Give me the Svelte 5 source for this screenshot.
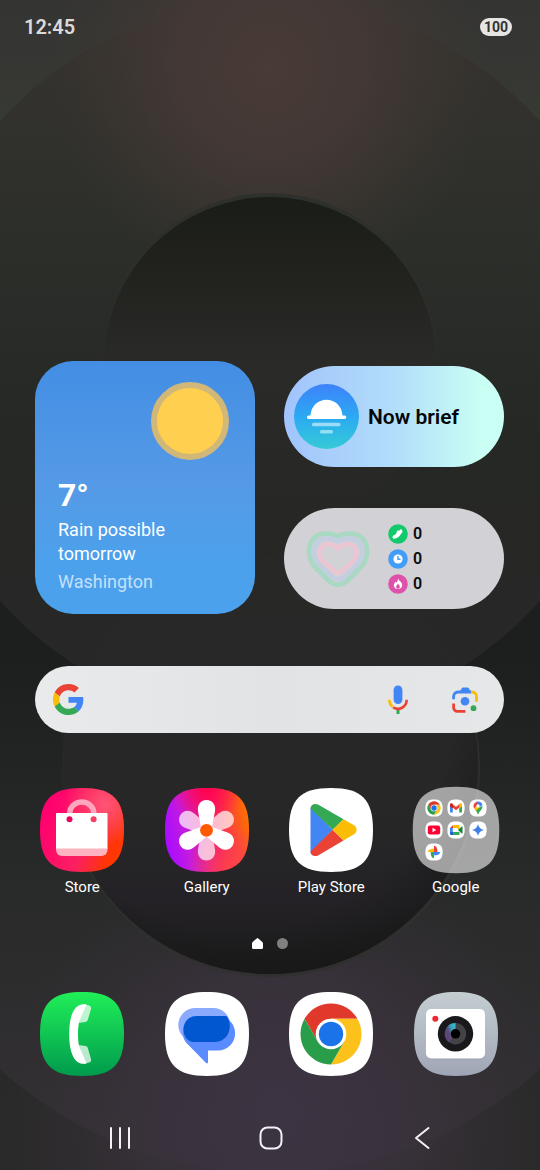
<script>
  const apps = [
    { id: 'store', label: 'Store' },
    { id: 'gallery', label: 'Gallery' },
    { id: 'play', label: 'Play Store' },
    { id: 'folder', label: 'Google' }
  ];
  const dock = [
    { id: 'phone', label: 'Phone' },
    { id: 'messages', label: 'Messages' },
    { id: 'chrome', label: 'Chrome' },
    { id: 'camera', label: 'Camera' }
  ];
  const stats = [
    { id: 'steps', value: 0, color: '#14c96c' },
    { id: 'time', value: 0, color: '#429df8' },
    { id: 'burn', value: 0, color: '#df52aa' }
  ];
  const squircle = 'M42 0C72.500 0 84 11.500 84 42S72.500 84 42 84 0 72.500 0 42 11.500 0 42 0Z';
  const petal = 'M36.500 42 33 23C32 16.500 36 12 41.500 12S51 16.500 50 23L46.500 42Z';
</script>

{#snippet chromeLogo()}
  <path fill="#e1382c" d="M68.400 26.750A30.500 30.500 0 0 0 15.600 26.750L28.800 49.600 42 42V26.750Z" />
  <path fill="#fcc21b" d="M68.400 26.750A30.500 30.500 0 0 1 42 72.500L55.200 49.600 42 42V26.750Z" />
  <path fill="#2a9d4a" d="M15.600 26.750A30.500 30.500 0 0 0 42 72.500L55.200 49.600 42 42 28.800 49.600Z" />
  <circle cx="42" cy="42" r="15.300" fill="#fff" />
  <circle cx="42" cy="42" r="12.200" fill="#1a73e8" />
{/snippet}

{#snippet mini(x, y)}
  <path fill="#fff" d={squircle} transform="translate({x} {y}) scale(.205) translate(-42 -42)" />
{/snippet}

{#snippet icon(id)}
  <svg class="app-icon" viewBox="0 0 84 84" aria-hidden="true">
    {#if id === 'store'}
      <path fill="url(#storeBase)" d={squircle} />
      <path fill="url(#storeGlow)" d={squircle} />
      <path fill="none" stroke="#ffa5bd" stroke-width="5.500" d="M29.800 26v-1a12 11 0 0 1 24 0v1" />
      <path fill="#fff" d="M17 25H66.500a1 1 0 0 1 1 1V61H16V26a1 1 0 0 1 1-1Z" />
      <path fill="#ffb2bf" d="M16 60.500H67.500V62a6 6 0 0 1-6 6H22a6 6 0 0 1-6-6Z" />
      <circle cx="29.500" cy="31.300" r="3" fill="#e9065f" />
      <circle cx="53.600" cy="31.300" r="3" fill="#f63f63" />
    {:else if id === 'gallery'}
      <path fill="url(#galBase)" d={squircle} />
      <path fill="url(#galBottom)" d={squircle} />
      <path fill="url(#galTop)" d={squircle} />
      {#each [60, 180, 300] as turn}
        <path fill="#fff" fill-opacity=".7" d={petal} transform="rotate({turn} 41.500 42.300)" />
      {/each}
      {#each [0, 120, 240] as turn}
        <path fill="#fff" d={petal} transform="rotate({turn} 41.500 42.300)" />
      {/each}
      <circle cx="41.500" cy="42.300" r="6.400" fill="#ff5a00" />
    {:else if id === 'play'}
      <path fill="#fff" d={squircle} />
      <path fill="#4285f4" d="M21.500 19.500 43.700 41.800 21.500 65Z" />
      <path fill="#34a853" d="M21.500 20.500C21.500 16.500 25.500 14.800 29 16.600L54.500 31.200 43.700 41.800Z" />
      <path fill="#ea4335" d="M21.500 63.500C21.500 67.500 25.500 69.200 29 67.400L54.500 52.400 43.700 41.800Z" />
      <path fill="#fbbc04" d="M54.500 31.200 65 37.300C68.500 39.500 68.500 44.200 65 46.300L54.500 52.400 43.700 41.800Z" />
    {:else if id === 'folder'}
      <path fill="#fff" fill-opacity=".58" d={squircle} transform="translate(42 42) scale(1.030) translate(-42 -42)" />
      {@render mini(20, 20)}{@render mini(42, 20)}{@render mini(64, 20)}
      {@render mini(20, 42)}{@render mini(42, 42)}{@render mini(64, 42)}
      {@render mini(20, 64)}
      <g transform="translate(20 20) scale(.22) translate(-42 -42)">{@render chromeLogo()}</g>
      <g transform="translate(42 20)">
        <path fill="#4285f4" d="M-6-3.500V4.500h2.800V-1.500Z" />
        <path fill="#34a853" d="M6-3.500V4.500H3.200V-1.500Z" />
        <path fill="none" stroke="#ea4335" stroke-width="2.700" d="M-4.700-3.200 0 .6 4.700-3.200" />
        <path fill="#c5221f" d="M-6-3.500c0-1.500 2-1.500 2.800-.5V.5L-6-1.500Z" />
        <path fill="#fbbc04" d="M6-3.500c0-1.500-2-1.500-2.800-.5V.5L6-1.500Z" />
      </g>
      <g transform="translate(64 20)">
        <path fill="#34a853" d="M4.600-2C4.600 2 1 3 .4 6.200H-.4C-.8 4-2 3-3 1.600Z" />
        <path fill="#fbbc04" d="M-3.800.4-1-2.600 1.600-.4-2 3Z" />
        <path fill="#ea4335" d="M-3.600-4.400A4.600 4.600 0 0 1-1-6.300L1-4-2-1.500-4-3Z" />
        <path fill="#4285f4" d="M-1.400-6.200C1-7.200 4-5.800 4.500-3L1.400-.5-.8-3.300Z" />
        <path fill="#ea4335" d="M-4.400-3A5 5 0 0 0-3.900.5L-1-2.800-3.600-4.600Z" />
        <circle cy="-2" r="1.700" fill="#fff" />
      </g>
      <g transform="translate(20 42)">
        <rect x="-6.200" y="-4.400" width="12.400" height="8.800" rx="2.200" fill="#ff0033" />
        <path fill="#fff" d="M-1.500-2.200V2.200L2.200 0Z" />
      </g>
      <g transform="translate(42 42)">
        <path fill="#ea4335" d="M-2.800-5V-2H-6Z" />
        <path fill="#4285f4" d="M-6-2h2.800V2H-6Z" />
        <path fill="#1967d2" d="M-6 2h3v3h-2a1 1 0 0 1-1-1Z" />
        <path fill="#34a853" d="M-3 2H3.500V4a1 1 0 0 1-1 1H-3Z" />
        <path fill="#fbbc04" d="M-2.800-5H2.500a1 1 0 0 1 1 1V0L1-2H-2.800Z" />
        <path fill="#188038" d="M2 0 5.500-3.300q1-.7 1 .4V3q0 1-1 .3Z" />
      </g>
      <path transform="translate(64 42)" fill="#3f7fe8" d="M0-6Q.9-.9 6 0 .9.900 0 6-.9.900-6 0-.9-.9 0-6Z" />
      <g transform="translate(20 64)">
        <path fill="#ea4335" d="M0-6.200V0H3.400C3.400-3.500 2.500-6 0-6.200Z" />
        <path fill="#4285f4" d="M6.200 0H0V3.300C3.500 3.300 6 2.500 6.200 0Z" />
        <path fill="#34a853" d="M0 6.200V0H-3.300C-3.300 3.500-2.500 6 0 6.200Z" />
        <path fill="#fbbc04" d="M-6.200 0H0V-3.300C-3.500-3.300-6-2.500-6.200 0Z" />
      </g>
    {:else if id === 'phone'}
      <path fill="url(#phoneBg)" d={squircle} />
      {#each ['', 'matrix(1 0 0 -1 0 84)'] as flip}
        <path fill="#fff" fill-opacity=".72" transform={flip} d="M44 12.300 49.300 13.500Q51.500 14.200 51 17L47.800 28Q47.200 29.700 45.500 29.900L38.500 31Z" />
      {/each}
      <path fill="#fff" d="M46.500 12.500C34 10 29.200 24 29.200 42S34 74 46.500 71.500L38.900 53.500C37.600 46 37.600 38 38.900 30.500Z" />
    {:else if id === 'messages'}
      <path fill="#fff" d={squircle} />
      <rect x="13.300" y="16" width="52" height="34" rx="17" fill="#8aaaff" />
      <path fill="#5b8cff" d="M31 24H52.800a17.300 17.300 0 0 1 0 34.600H43V70c0 1.500-1 1.900-2.200.8L21.500 51C15 44 17 24 31 24Z" />
      <path fill="#0057cf" d="M32 24H61.500C69 34 63 50 50 50H27C14 46 16 24 32 24Z" />
    {:else if id === 'chrome'}
      <path fill="#fff" d={squircle} />
      {@render chromeLogo()}
    {:else}
      <path fill="url(#camBg)" d={squircle} />
      <rect x="12" y="17.500" width="59" height="50" rx="5" fill="#8d95a0" opacity=".5" />
      <rect x="12" y="17" width="59" height="49.500" rx="5" fill="#fff" />
      <circle cx="21.300" cy="26.700" r="3" fill="#f3262f" />
      <circle cx="41.500" cy="41.800" r="17.700" fill="#19191c" />
      <circle cx="41.500" cy="41.800" r="10.700" fill="#434247" />
      <path fill="url(#lens)" d="M41.500 31.100V41.800L35 50.300A10.700 10.700 0 0 1 41.500 31.100Z" />
      <circle cx="41.500" cy="41.800" r="4.800" fill="#000" />
    {/if}
  </svg>
{/snippet}

<div class="screen">
  <svg class="wallpaper" viewBox="0 0 540 1170" preserveAspectRatio="xMidYMid slice" aria-hidden="true">
    <defs>
      <linearGradient id="wallBase" x2="0" y2="1"><stop stop-color="#343433" /><stop offset=".1" stop-color="#373933" /><stop offset=".5" stop-color="#1c1e1d" /><stop offset=".75" stop-color="#272827" /><stop offset="1" stop-color="#2b2a2a" /></linearGradient>
      <linearGradient id="lowerRing" x2="0" y2="1"><stop stop-color="#1c1e1d" /><stop offset=".36" stop-color="#1d1f1e" /><stop offset=".65" stop-color="#292a2a" /><stop offset="1" stop-color="#353135" /></linearGradient>
      <linearGradient id="upperRing" x2="0" y2="1"><stop stop-color="#373330" /><stop offset=".3" stop-color="#2d2f2b" /><stop offset=".6" stop-color="#262825" /><stop offset="1" stop-color="#272727" /></linearGradient>
      <radialGradient id="warm" gradientUnits="userSpaceOnUse" cx="270" cy="70" r="220"><stop stop-color="#493b37" /><stop offset=".45" stop-color="#453936" stop-opacity=".8" /><stop offset="1" stop-color="#40382f" stop-opacity="0" /></radialGradient>
      <radialGradient id="violet" gradientUnits="userSpaceOnUse" cx="280" cy="1110" r="270"><stop stop-color="#3d3443" /><stop offset=".5" stop-color="#3a323d" stop-opacity=".8" /><stop offset="1" stop-color="#353036" stop-opacity="0" /></radialGradient>
      <linearGradient id="hollowTop" x2="0" y2="1"><stop stop-color="#1a1c17" /><stop offset=".25" stop-color="#22231f" /><stop offset=".5" stop-color="#2a2a28" /><stop offset="1" stop-color="#272726" /></linearGradient>
      <linearGradient id="hollowLow" x2="0" y2="1"><stop stop-color="#282827" /><stop offset=".6" stop-color="#272727" /><stop offset=".82" stop-color="#242226" /><stop offset="1" stop-color="#1b1a1a" /></linearGradient>
      <linearGradient id="lipTop" x2="0" y2="1"><stop stop-color="#2d302b" /><stop offset=".5" stop-color="#2a2c29" /><stop offset=".7" stop-color="#282827" stop-opacity="0" /></linearGradient>
      <linearGradient id="lipLow" x2="0" y2="1"><stop stop-color="#2b2b2a" /><stop offset="1" stop-color="#30302e" /></linearGradient>
      <radialGradient id="rim" cx=".42" cy=".38" r=".64"><stop offset=".8" stop-color="#161616" stop-opacity="0" /><stop offset="1" stop-color="#161616" stop-opacity=".55" /></radialGradient>
      <linearGradient id="storeBase" x1="0" y1=".4" x2="1" y2=".8"><stop stop-color="#ff0070" /><stop offset=".55" stop-color="#fb2060" /><stop offset=".85" stop-color="#ff3505" /><stop offset="1" stop-color="#ff3a00" /></linearGradient>
      <radialGradient id="storeGlow" cx=".78" cy=".2" r=".5"><stop stop-color="#ff5578" /><stop offset="1" stop-color="#ff5060" stop-opacity="0" /></radialGradient>
      <linearGradient id="galBase" y1=".6" x2="1" y2=".4"><stop stop-color="#a80cff" /><stop offset=".25" stop-color="#c41ce0" /><stop offset=".6" stop-color="#fb2060" /><stop offset="1" stop-color="#ff7000" /></linearGradient>
      <radialGradient id="galBottom" cx=".8" cy="1" r=".55"><stop stop-color="#ff4540" /><stop offset="1" stop-color="#f53c70" stop-opacity="0" /></radialGradient>
      <radialGradient id="galTop" cx=".5" cy="0" r=".45"><stop stop-color="#ff0050" /><stop offset="1" stop-color="#ff0060" stop-opacity="0" /></radialGradient>
      <linearGradient id="phoneBg" x2="0" y2="1"><stop stop-color="#20ef58" /><stop offset="1" stop-color="#009a4d" /></linearGradient>
      <linearGradient id="camBg" x2="0" y2="1"><stop stop-color="#c4ced1" /><stop offset="1" stop-color="#a0a5b5" /></linearGradient>
      <linearGradient id="lens" x1="1" x2="0" y2=".8"><stop stop-color="#35c5dc" /><stop offset=".35" stop-color="#3a9fba" /><stop offset=".6" stop-color="#5b4a7c" /><stop offset="1" stop-color="#584472" /></linearGradient>
      <linearGradient id="brief" x2="0" y2="1"><stop stop-color="#3f82fb" /><stop offset=".5" stop-color="#2ba9f2" /><stop offset="1" stop-color="#35cbd6" /></linearGradient>
    </defs>
    <rect width="540" height="1170" fill="url(#wallBase)" />
    <circle cx="270" cy="770" r="403" fill="url(#lowerRing)" />
    <rect y="840" width="540" height="330" fill="url(#violet)" />
    <circle cx="270" cy="361" r="361" fill="url(#upperRing)" />
    <rect width="540" height="300" fill="url(#warm)" />
    <circle cx="271" cy="768" r="209" fill="url(#lipLow)" />
    <circle cx="270" cy="766" r="208" fill="url(#hollowLow)" />
    <circle cx="270" cy="766" r="208" fill="url(#rim)" />
    <circle cx="270" cy="360" r="167" fill="url(#lipTop)" />
    <circle cx="270" cy="363" r="166" fill="url(#hollowTop)" />
  </svg>

  <header class="status">
    <time>12:45</time>
    <span class="battery">100</span>
  </header>

  <main>
    <section class="widgets">
      <article class="weather">
        <div class="sun"></div>
        <strong class="temp">7°</strong>
        <p class="forecast">Rain possible<br />tomorrow</p>
        <p class="city">Washington</p>
      </article>
      <div class="side">
        <button class="brief" type="button">
          <svg width="65" height="65" viewBox="0 0 65 65" aria-hidden="true">
            <circle cx="32.500" cy="32.500" r="32.500" fill="url(#brief)" />
            <path fill="#fff" d="M16.500 31.500C17 22 24 15.700 32.500 15.700S48 22 48.500 31.500H50.500a1.800 1.800 0 0 1 0 3.600H14.700a1.800 1.800 0 0 1 0-3.600Z" />
            <rect x="18" y="38.700" width="28.500" height="3.500" rx="1.500" fill="#9ddcf8" />
            <rect x="26" y="46" width="13" height="3.500" rx="1.500" fill="#93dff0" />
          </svg>
          <span>Now brief</span>
        </button>
        <article class="health">
          <svg width="64" height="58" viewBox="0 0 64 58" fill="none" stroke-width="4.800" aria-hidden="true">
            <path stroke="#a9d8c3" d="M32 6.500C28 4 24 3.200 18 3.700 9 4.500 3 11 3 21.500 3 30 7 35 13 41L23 51C28.500 56 35.500 56 41 51L51 41C57 35 61 30 61 21.500 61 11 55 4.500 46 3.700 40 3.200 36 4 32 6.500Z" />
            <path stroke="#c3cfe0" d="M32 11.500C28 9 24 8.200 19 8.700 12 9.700 8 15 8 22 8 28.500 11 32 16 37L26 47C30 50.500 34 50.500 38 47L48 37C53 32 56 28.500 56 22 56 15 52 9.700 45 8.700 40 8.200 36 9 32 11.500Z" />
            <path stroke="#ebc6d2" d="M32 18.500C28.500 15 25 13.700 21 14.200 16 15 13.500 19 13.500 23.500 13.500 27 15 29.500 18 32.500L28.500 41.500C31 43.500 33 43.500 35.500 41.500L46 32.500C49 29.500 50.500 27 50.500 23.500 50.500 19 48 15 43 14.200 39 13.700 35.500 15 32 18.500Z" />
          </svg>
          <ul>
            {#each stats as stat}
              <li>
                <svg width="20" height="20" viewBox="0 0 20 20" aria-hidden="true">
                  <circle cx="10" cy="10" r="9.800" fill={stat.color} />
                  {#if stat.id === 'steps'}
                    <path fill="#fff" d="M5.500 11.500C8 11 8.500 9 9 7l1.200-.7.8.7 1.500-1.800 1.300.3.800 2.200-1.800 2.600C11.500 12.500 9 14.800 6 14.800c-1.800 0-1.800-2.800-.5-3.300Z" />
                  {:else if stat.id === 'time'}
                    <circle cx="10" cy="10" r="4.600" fill="#fff" />
                    <path fill="none" stroke={stat.color} stroke-width="1.400" d="M10 7v3.300h2.500" />
                  {:else}
                    <path fill="#fff" d="M10 4.500C11 7 14.200 8 14.200 11.300 14.200 13.700 12.300 15 10 15S5.800 13.700 5.800 11.300C5.800 9.500 7 8.700 7.500 7.700L8.500 8.500C9.500 7.500 10 6 10 4.500Z" />
                    <path fill={stat.color} d="M10 9.500 11.700 12A1.900 1.900 0 1 1 8.300 12Z" />
                  {/if}
                </svg>
                <span>{stat.value}</span>
              </li>
            {/each}
          </ul>
        </article>
      </div>
    </section>

    <form class="search" role="search">
      <svg width="31" height="31" viewBox="0 0 48 48" aria-hidden="true">
        <path fill="#EA4335" d="M24 9.500c3.540 0 6.710 1.220 9.210 3.600l6.850-6.850C35.900 2.380 30.470 0 24 0 14.620 0 6.510 5.380 2.560 13.220l7.980 6.190C12.430 13.720 17.740 9.500 24 9.500z" />
        <path fill="#4285F4" d="M46.980 24.550c0-1.570-.15-3.090-.38-4.550H24v9.020h12.940c-.58 2.960-2.260 5.480-4.780 7.180l7.730 6c4.510-4.180 7.090-10.360 7.090-17.650z" />
        <path fill="#FBBC05" d="M10.530 28.590c-.48-1.450-.76-2.990-.76-4.590s.27-3.140.76-4.590l-7.980-6.190C.92 16.460 0 20.120 0 24c0 3.880.92 7.540 2.560 10.780l7.970-6.190z" />
        <path fill="#34A853" d="M24 48c6.480 0 11.930-2.130 15.890-5.810l-7.730-6c-2.150 1.450-4.920 2.300-8.160 2.300-6.260 0-11.570-4.220-13.470-9.910l-7.980 6.190C6.510 42.620 14.620 48 24 48z" />
      </svg>
      <input type="search" aria-label="Search" />
      <button type="button" aria-label="Voice search">
        <svg width="20" height="30" viewBox="0 0 20 30" fill="none" stroke-width="2.600" aria-hidden="true">
          <rect x="5.600" y=".5" width="8.800" height="18.500" rx="4.400" fill="#4285f4" />
          <path stroke="#34a853" stroke-width="3" d="M10 24v5" />
          <path stroke="#ea4335" d="M5 22.200A8.600 8.600 0 0 0 18.600 14.800" />
          <path stroke="#fbbc04" d="M1.400 14.800A8.600 8.600 0 0 0 4.500 21.700" />
        </svg>
      </button>
      <button type="button" aria-label="Lens search">
        <svg width="26" height="26" viewBox="0 0 26 26" fill="none" stroke-width="2.800" aria-hidden="true">
          <path stroke="#4285f4" d="M1.600 12.300V9.500a4.500 4.500 0 0 1 4.500-4.500H19" />
          <path fill="#4285f4" d="M7.500 5 9.800 1.200Q10.200.5 11 .5h4.500q.8 0 1.200.7L19 5Z" />
          <path stroke="#fbbc04" d="M19 5h1a4.500 4.500 0 0 1 4.500 4.500v5.300" />
          <path stroke="#ea4335" d="M1.600 16.500v4a3.800 3.800 0 0 0 3.800 3.800h8" />
          <circle cx="13" cy="14.200" r="4.300" fill="#4285f4" />
          <circle cx="21.500" cy="21.200" r="2.900" fill="#34a853" />
        </svg>
      </button>
    </form>

    <section class="apps">
      {#each apps as app}
        <button type="button">{@render icon(app.id)}<span>{app.label}</span></button>
      {/each}
    </section>

    <div class="pages" aria-hidden="true">
      <svg width="11" height="11" viewBox="0 0 11 11"><path fill="#fff" d="M4.700.4Q5.500-.2 6.300.4L10.300 4Q11 4.600 11 5.400V9.800Q11 11 9.800 11H1.200Q0 11 0 9.800V5.400Q0 4.600.7 4Z" /></svg>
      <i></i>
    </div>
  </main>

  <section class="apps dock">
    {#each dock as app}
      <button type="button" aria-label={app.label}>{@render icon(app.id)}</button>
    {/each}
  </section>

  <nav>
    <button type="button" aria-label="Recents"><svg width="24" height="24" viewBox="0 0 24 24"><path d="M3 2V22M12 2V22M21 2V22" /></svg></button>
    <button type="button" aria-label="Home"><svg width="24" height="24" viewBox="0 0 24 24"><rect x="1.500" y="1.500" width="21" height="21" rx="7" /></svg></button>
    <button type="button" aria-label="Back"><svg width="24" height="24" viewBox="0 0 24 24"><path d="M18.500 2 6 12 18.500 22" /></svg></button>
  </nav>
</div>

<style>
  :global(body) { background: #272727; }
  .screen {
    position: relative;
    display: flex;
    flex-direction: column;
    min-height: 100vh;
    overflow: hidden;
    isolation: isolate;
    font-family: Roboto, Inter, "Noto Sans", sans-serif;
    color: #fff;
  }
  .wallpaper { position: absolute; inset: 0; width: 100%; height: 100%; z-index: -1; }
  button { border: 0; padding: 0; background: none; color: inherit; font: inherit; cursor: pointer; }
  svg { display: block; flex: none; }
  p { margin: 0; }

  .status {
    display: flex;
    justify-content: space-between;
    align-items: center;
    height: 54px;
    padding: 0 28px 0 24px;
    color: #dcdad8;
  }
  time { font-size: 20px; font-weight: 600; }
  .battery {
    padding: 0 4px;
    border-radius: 9px;
    background: #e6e5e4;
    color: #343230;
    font-size: 14px;
    line-height: 18px;
    font-weight: 700;
  }

  .widgets {
    display: grid;
    grid-template-columns: 1fr 1fr;
    gap: 29px;
    margin: 307px 36px 0 35px;
  }
  .weather {
    display: flex;
    flex-direction: column;
    padding: 21px 26px 20px 23px;
    border-radius: 38px;
    background: linear-gradient(#438ee4, #559ae6 50%, #4ba1ec 80%, #4ba1ec);
    font-size: 18px;
    line-height: 24px;
  }
  .sun {
    align-self: flex-end;
    box-sizing: border-box;
    width: 78px;
    height: 78px;
    border: 6px solid #d2b878;
    border-radius: 50%;
    background: #ffcf50;
  }
  .temp { margin-top: 17px; font-size: 32px; line-height: 36px; font-weight: 700; }
  .forecast { margin-top: 5px; }
  .city { margin-top: 4px; color: #c6e0f9; }

  .side { display: flex; flex-direction: column; justify-content: center; gap: 41px; }
  .brief, .health { display: flex; align-items: center; height: 101px; border-radius: 51px; }
  .brief {
    gap: 9px;
    padding: 0 10px;
    background: linear-gradient(90deg, #a1c4fc, #b2ddfa 50%, #c9fff4 90%);
    color: #050608;
    font-size: 21px;
    font-weight: 600;
  }
  .health { gap: 18px; padding: 0 22px; background: #d2d1d5; color: #0a0a0a; }
  ul { display: grid; gap: 5px; margin: 0; padding: 0; list-style: none; }
  li { display: flex; align-items: center; gap: 5px; font-size: 16px; line-height: 20px; font-weight: 600; }

  .search {
    display: flex;
    align-items: center;
    height: 67px;
    margin: 52px 36px 0 35px;
    padding: 0 26px 0 18px;
    border-radius: 34px;
    background: linear-gradient(90deg, #e8eaeb, #e2e3e5 50%, #e6e7e8);
  }
  .search input { flex: 1; min-width: 0; height: 40px; border: 0; outline: 0; background: none; font: inherit; }
  .search button + button { margin-left: 44px; }

  .apps {
    display: grid;
    grid-template-columns: repeat(4, 1fr);
    padding: 0 22px 0 20px;
    margin-top: 55px;
    font-size: 15px;
    line-height: 20px;
  }
  .apps button { display: flex; flex-direction: column; align-items: center; gap: 5px; }
  .app-icon { width: 84px; height: 84px; overflow: visible; }

  .pages { display: flex; justify-content: center; align-items: center; gap: 14px; margin-top: 41px; }
  .pages i { width: 11px; height: 11px; border-radius: 50%; background: #808080; }

  .dock { margin-top: 43px; }
  nav {
    display: grid;
    grid-template-columns: repeat(3, 1fr);
    margin-top: 50px;
    padding: 0 43px 20px 44px;
  }
  nav button { display: flex; justify-content: center; }
  nav svg { fill: none; stroke: #f4f2f5; stroke-width: 2; stroke-linecap: round; stroke-linejoin: round; }
</style>
